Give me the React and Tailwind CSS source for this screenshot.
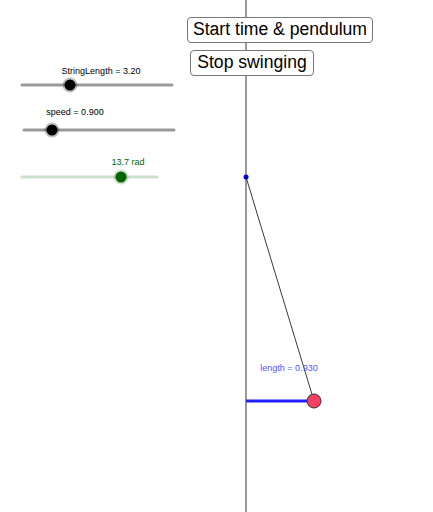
import React from "react";

function Canvas() {
  return (
    <svg width="433" height="512" viewBox="0 0 433 512" className="absolute left-0 top-0" style={{ fontFamily: '"Liberation Sans", Arial, sans-serif' }}>
      {/* y axis */}
      <line x1="246" y1="0" x2="246" y2="512" stroke="#555" strokeWidth="1.2" />

      {/* slider StringLength */}
      <text x="101" y="74" fontSize="9" textAnchor="middle" fill="#000">StringLength = 3.20</text>
      <line x1="22" y1="85" x2="172" y2="85" stroke="#999" strokeWidth="3" strokeLinecap="round" />
      <circle cx="70" cy="85" r="7.5" fill="#000" fillOpacity="0.25" />
      <circle cx="70" cy="85" r="5.5" fill="#000" />

      {/* slider speed */}
      <text x="75" y="115" fontSize="9" textAnchor="middle" fill="#000">speed = 0.900</text>
      <line x1="24" y1="130" x2="174" y2="130" stroke="#999" strokeWidth="3" strokeLinecap="round" />
      <circle cx="52" cy="130" r="7.5" fill="#000" fillOpacity="0.25" />
      <circle cx="52" cy="130" r="5.5" fill="#000" />

      {/* slider angle */}
      <text x="128" y="165" fontSize="9" textAnchor="middle" fill="#006400">13.7 rad</text>
      <line x1="22" y1="177" x2="157" y2="177" stroke="#cce0cc" strokeWidth="3" strokeLinecap="round" />
      <circle cx="121" cy="177" r="7.5" fill="#006400" fillOpacity="0.2" />
      <circle cx="121" cy="177" r="5.5" fill="#006400" />

      {/* pendulum */}
      <line x1="246" y1="177" x2="314" y2="401" stroke="#222" strokeWidth="0.9" />
      <line x1="246" y1="401" x2="308" y2="401" stroke="#2020ff" strokeWidth="3" />
      <circle cx="246" cy="177" r="2.5" fill="#0000dd" />
      <text x="289" y="371" fontSize="9" textAnchor="middle" fill="#5555ff">length = 0.930</text>
      <circle cx="314" cy="401" r="7" fill="#f2405e" stroke="#333" strokeWidth="1" />
    </svg>
  );
}

export default function App() {
  return (
    <div className="relative w-[433px] h-[512px] bg-white overflow-hidden" style={{ fontFamily: '"Liberation Sans", Arial, sans-serif' }}>
      <Canvas />
      <button className="absolute left-[187px] top-[17px] h-[26px] w-[186px] flex items-center justify-center rounded-[4px] border border-[#777] bg-white text-[17.6px] leading-none text-black">
        Start time &amp; pendulum
      </button>
      <button className="absolute left-[190px] top-[50px] h-[26px] w-[124px] flex items-center justify-center rounded-[4px] border border-[#777] bg-white text-[17.6px] leading-none text-black">
        Stop swinging
      </button>
    </div>
  );
}
